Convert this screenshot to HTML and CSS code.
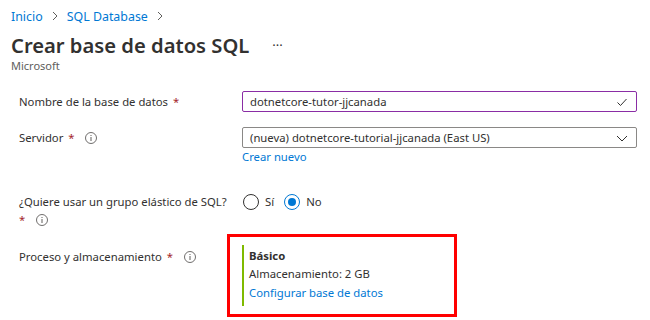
FILE: index.html
```html
<!DOCTYPE html>
<html lang="es">
<head>
<meta charset="utf-8">
<title>Crear base de datos SQL</title>
<link rel="stylesheet" href="styles.css">
</head>
<body>
<div class="page">
  <nav class="crumbs">
    <a class="crumb">Inicio</a>
    <svg class="sep" viewBox="0 0 8 12" width="8" height="12"><path d="M2 2 L6 6 L2 10" fill="none" stroke="#605e5c" stroke-width="1"/></svg>
    <a class="crumb">SQL Database</a>
    <svg class="sep" viewBox="0 0 8 12" width="8" height="12"><path d="M2 2 L6 6 L2 10" fill="none" stroke="#605e5c" stroke-width="1"/></svg>
  </nav>
  <div class="title-row">
    <h1 class="title">Crear base de datos SQL</h1>
    <span class="more">···</span>
  </div>
  <div class="sub">Microsoft</div>

  <div class="form">
    <div class="row row-name">
      <div class="label">Nombre de la base de datos <span class="req">*</span></div>
      <div class="ctrl">
        <div class="field focus">
          <span class="val">dotnetcore-tutor-jjcanada</span>
          <svg class="ico" viewBox="0 0 12 12" width="12" height="12"><path d="M1.5 6.5 L4.5 9.5 L10.5 3" fill="none" stroke="#323130" stroke-width="1"/></svg>
        </div>
      </div>
    </div>

    <div class="row row-server">
      <div class="label">Servidor <span class="req">*</span>
        <svg class="info" viewBox="0 0 12 12" width="12" height="12"><circle cx="6" cy="6" r="5.5" fill="none" stroke="#605e5c" stroke-width="0.9"/><rect x="5.5" y="5" width="1" height="4" fill="#605e5c"/><rect x="5.5" y="3" width="1" height="1" fill="#605e5c"/></svg>
      </div>
      <div class="ctrl">
        <div class="field">
          <span class="val">(nueva) dotnetcore-tutorial-jjcanada (East US)</span>
          <svg class="ico" viewBox="0 0 12 12" width="12" height="12"><path d="M1 4 L6 9 L11 4" fill="none" stroke="#323130" stroke-width="1"/></svg>
        </div>
        <a class="link new">Crear nuevo</a>
      </div>
    </div>

    <div class="row row-pool">
      <div class="label">¿Quiere usar un grupo elástico de SQL?<br><span class="req first">*</span>
        <svg class="info" viewBox="0 0 12 12" width="12" height="12"><circle cx="6" cy="6" r="5.5" fill="none" stroke="#605e5c" stroke-width="0.9"/><rect x="5.5" y="5" width="1" height="4" fill="#605e5c"/><rect x="5.5" y="3" width="1" height="1" fill="#605e5c"/></svg>
      </div>
      <div class="ctrl radios">
        <span class="radio"><span class="dot"></span>Sí</span>
        <span class="radio on"><span class="dot"></span>No</span>
      </div>
    </div>

    <div class="row row-compute">
      <div class="label">Proceso y almacenamiento <span class="req">*</span>
        <svg class="info" viewBox="0 0 12 12" width="12" height="12"><circle cx="6" cy="6" r="5.5" fill="none" stroke="#605e5c" stroke-width="0.9"/><rect x="5.5" y="5" width="1" height="4" fill="#605e5c"/><rect x="5.5" y="3" width="1" height="1" fill="#605e5c"/></svg>
      </div>
      <div class="ctrl">
        <div class="highlight">
          <div class="summary">
            <div class="tier">Básico</div>
            <div class="storage">Almacenamiento: 2 GB</div>
            <a class="link cfg">Configurar base de datos</a>
          </div>
        </div>
      </div>
    </div>
  </div>
</div>
</body>
</html>
```

FILE: styles.css
```css
* { box-sizing: border-box; }
html, body { margin: 0; padding: 0; background: #ffffff; }
body {
  font-family: "Noto Sans", "Open Sans", "Liberation Sans", sans-serif;
  font-size: 11.3px;
  color: #323130;
  width: 650px;
  height: 320px;
  overflow: hidden;
}
.page { padding: 0 0 0 11px; }
.crumbs {
  display: flex;
  align-items: center;
  gap: 8px;
  height: 20px;
  margin-top: 6px;
  font-size: 12.4px;
}
.crumb { color: #0078d4; text-decoration: none; }
.sep { display: block; }
.title-row {
  display: flex;
  align-items: center;
  margin-top: 5px;
  height: 28px;
}
.title {
  margin: 0;
  font-size: 20.2px;
  font-weight: 600;
  line-height: 28px;
  color: #323130;
}
.more {
  margin-left: 23px;
  font-size: 13px;
  line-height: 14px;
  color: #323130;
}
.sub {
  font-size: 11px;
  color: #605e5c;
  line-height: 14px;
}
.form {
  margin-top: 18px;
  padding-left: 8px;
  display: flex;
  flex-direction: column;
}
.row {
  display: grid;
  grid-template-columns: 223px 395px;
}
.label { line-height: 18px; }
.req { color: #a4262c; margin-left: 2px; }
.req.first { margin-left: 0; }
.info { vertical-align: -2px; margin-left: 8px; }
.field {
  height: 21px;
  border: 1px solid #8a8886;
  border-radius: 2px;
  display: flex;
  align-items: center;
  justify-content: space-between;
  padding: 0 8px 0 7px;
  color: #323130;
}
.field.focus { border-color: #8a2da5; }
.ico { display: block; }
.link { color: #0078d4; text-decoration: none; display: block; }
.new { line-height: 18px; }
.row-name .label { line-height: 21px; }
.row-server { margin-top: 15px; }
.row-server .label { line-height: 21px; }
.row-pool { margin-top: 27px; }
.radios { display: flex; align-items: flex-start; gap: 10px; padding: 1px 0 0 1px; }
.radio { display: flex; align-items: center; gap: 6px; line-height: 16px; }
.radio .dot {
  width: 16px; height: 16px;
  border: 1px solid #323130;
  border-radius: 50%;
  position: relative;
}
.radio.on .dot { border-color: #0078d4; }
.radio.on .dot::after {
  content: "";
  position: absolute;
  left: 3px; top: 3px;
  width: 8px; height: 8px;
  border-radius: 50%;
  background: #0078d4;
}
.row-compute { margin-top: 5px; }
.row-compute .label { padding-top: 14px; }
.highlight {
  margin-left: -15px;
  width: 230px;
  height: 83px;
  border: 3px solid #ff0000;
  padding: 8px 0 0 12px;
}
.summary {
  border-left: 2px solid #7fba00;
  padding: 2px 0 0 5px;
  height: 61px;
  line-height: 18px;
}
.tier { font-weight: 700; }
.cfg { margin-top: 1px; }
```
